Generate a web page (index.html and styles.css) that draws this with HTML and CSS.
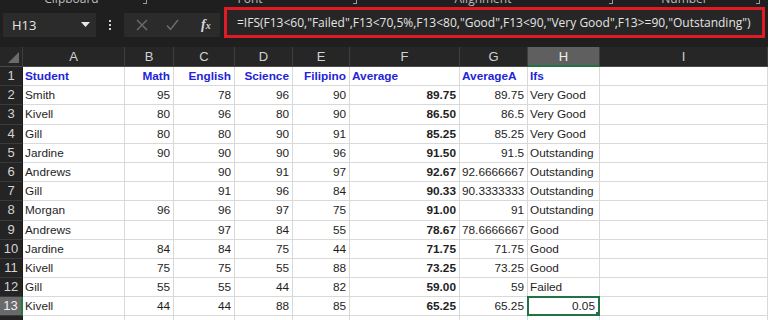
FILE: index.html
```html
<!DOCTYPE html>
<html lang="en">
<head>
    <meta charset="UTF-8">
    <title>IFS formula</title>
    <link rel="stylesheet" href="styles.css">
</head>
<body>
    <div class="ribbon-labels">
        <span class="grp" style="width:143px">Clipboard</span><span class="launch"></span>
        <span class="grp" style="width:206px">Font</span><span class="launch"></span>
        <span class="grp" style="width:252px">Alignment</span><span class="launch"></span>
        <span class="grp" style="width:143px">Number</span><span class="launch"></span>
    </div>

    <div class="formula-bar">
        <div class="name-box">
            <span>H13</span>
            <svg width="9" height="6" viewBox="0 0 9 6"><path d="M0 0 L9 0 L4.5 5 Z" fill="#e8e8e8"/></svg>
        </div>
        <div class="vdots"><i></i><i></i><i></i></div>
        <div class="fx-buttons">
            <svg width="12" height="12" viewBox="0 0 12 12"><path d="M1 1 L11 11 M11 1 L1 11" stroke="#6e6e6e" stroke-width="1.4"/></svg>
            <svg width="13" height="12" viewBox="0 0 13 12"><path d="M1 6.5 L4.5 10.5 L12 1" stroke="#6e6e6e" stroke-width="1.4" fill="none"/></svg>
            <span class="fx"><i>f</i><small>x</small></span>
        </div>
        <div class="formula-input">=IFS(F13&lt;60,"Failed",F13&lt;70,5%,F13&lt;80,"Good",F13&lt;90,"Very Good",F13&gt;=90,"Outstanding")</div>
    </div>

    <div class="sheet">
        <div class="row col-heads">
            <div class="corner"></div>
            <div>A</div><div>B</div><div>C</div><div>D</div><div>E</div><div>F</div><div>G</div><div class="sel">H</div><div>I</div>
        </div>
        <div class="row">
            <div class="rh">1</div>
            <div class="h">Student</div><div class="h r">Math</div><div class="h r">English</div><div class="h r">Science</div><div class="h r">Filipino</div><div class="h">Average</div><div class="h">AverageA</div><div class="h">Ifs</div><div></div>
        </div>
        <div class="row">
            <div class="rh">2</div>
            <div>Smith</div><div class="r">95</div><div class="r">78</div><div class="r">96</div><div class="r">90</div><div class="r b">89.75</div><div class="r">89.75</div><div>Very Good</div><div></div>
        </div>
        <div class="row">
            <div class="rh">3</div>
            <div>Kivell</div><div class="r">80</div><div class="r">96</div><div class="r">80</div><div class="r">90</div><div class="r b">86.50</div><div class="r">86.5</div><div>Very Good</div><div></div>
        </div>
        <div class="row">
            <div class="rh">4</div>
            <div>Gill</div><div class="r">80</div><div class="r">80</div><div class="r">90</div><div class="r">91</div><div class="r b">85.25</div><div class="r">85.25</div><div>Very Good</div><div></div>
        </div>
        <div class="row">
            <div class="rh">5</div>
            <div>Jardine</div><div class="r">90</div><div class="r">90</div><div class="r">90</div><div class="r">96</div><div class="r b">91.50</div><div class="r">91.5</div><div>Outstanding</div><div></div>
        </div>
        <div class="row">
            <div class="rh">6</div>
            <div>Andrews</div><div class="r"></div><div class="r">90</div><div class="r">91</div><div class="r">97</div><div class="r b">92.67</div><div class="r">92.6666667</div><div>Outstanding</div><div></div>
        </div>
        <div class="row">
            <div class="rh">7</div>
            <div>Gill</div><div class="r"></div><div class="r">91</div><div class="r">96</div><div class="r">84</div><div class="r b">90.33</div><div class="r">90.3333333</div><div>Outstanding</div><div></div>
        </div>
        <div class="row">
            <div class="rh">8</div>
            <div>Morgan</div><div class="r">96</div><div class="r">96</div><div class="r">97</div><div class="r">75</div><div class="r b">91.00</div><div class="r">91</div><div>Outstanding</div><div></div>
        </div>
        <div class="row">
            <div class="rh">9</div>
            <div>Andrews</div><div class="r"></div><div class="r">97</div><div class="r">84</div><div class="r">55</div><div class="r b">78.67</div><div class="r">78.6666667</div><div>Good</div><div></div>
        </div>
        <div class="row">
            <div class="rh">10</div>
            <div>Jardine</div><div class="r">84</div><div class="r">84</div><div class="r">75</div><div class="r">44</div><div class="r b">71.75</div><div class="r">71.75</div><div>Good</div><div></div>
        </div>
        <div class="row">
            <div class="rh">11</div>
            <div>Kivell</div><div class="r">75</div><div class="r">75</div><div class="r">55</div><div class="r">88</div><div class="r b">73.25</div><div class="r">73.25</div><div>Good</div><div></div>
        </div>
        <div class="row">
            <div class="rh">12</div>
            <div>Gill</div><div class="r">55</div><div class="r">55</div><div class="r">44</div><div class="r">82</div><div class="r b">59.00</div><div class="r">59</div><div>Failed</div><div></div>
        </div>
        <div class="row">
            <div class="rh sel">13</div>
            <div>Kivell</div><div class="r">44</div><div class="r">44</div><div class="r">88</div><div class="r">85</div><div class="r b">65.25</div><div class="r">65.25</div><div class="r active">0.05</div><div></div>
        </div>
        <div class="row">
            <div class="rh">14</div>
            <div>Jardine</div><div class="r">90</div><div class="r">90</div><div class="r">90</div><div class="r">90</div><div class="r b">90.00</div><div class="r">90</div><div>Very Good</div><div></div>
        </div>
    </div>
</body>
</html>
```

FILE: styles.css
```css
* {
    margin: 0;
    padding: 0;
    box-sizing: border-box;
}
body {
    width: 768px;
    height: 320px;
    overflow: hidden;
    background: #1f1f1f;
    font-family: "Liberation Sans", Arial, sans-serif;
}

/* ribbon group names, cut off at the top */
.ribbon-labels {
    height: 8px;
    display: flex;
    align-items: flex-end;
    overflow: hidden;
    color: #bdbdbd;
    font-family: "Open Sans", sans-serif;
    font-size: 12px;
    line-height: 12px;
}
.ribbon-labels .grp {
    text-align: center;
    transform: translateY(-3px);
}
.ribbon-labels .launch {
    width: 4px;
    height: 4px;
    border-right: 1px solid #9a9a9a;
    border-bottom: 1px solid #9a9a9a;
    margin-bottom: 4px;
}

/* formula bar */
.formula-bar {
    height: 38px;
    display: flex;
    align-items: flex-start;
}
.name-box {
    margin: 5px 0 0 3px;
    width: 93px;
    height: 24px;
    background: #2b2b2b;
    display: flex;
    align-items: center;
    justify-content: space-between;
    padding: 0 6px 0 9px;
    color: #e6e6e6;
    font-family: "Open Sans", sans-serif;
    font-size: 13px;
}
.vdots {
    width: 28px;
    height: 34px;
    display: flex;
    flex-direction: column;
    align-items: center;
    justify-content: center;
    gap: 2px;
}
.vdots i {
    width: 2px;
    height: 2px;
    background: #cfcfcf;
}
.fx-buttons {
    margin-top: 5px;
    width: 96px;
    height: 24px;
    background: #2b2b2b;
    display: flex;
    align-items: center;
    padding-left: 12px;
    gap: 18px;
}
.fx {
    color: #d8d8d8;
    font-family: "Liberation Serif", serif;
    font-size: 14px;
    font-weight: bold;
    margin-left: 4px;
}
.fx small {
    font-size: 10px;
    font-style: italic;
}
.formula-input {
    margin: -1px 0 0 4px;
    width: 541px;
    height: 31px;
    border: 3px solid #e01b24;
    background: #262626;
    color: #e4e4e4;
    font-family: "Open Sans", sans-serif;
    font-size: 12px;
    line-height: 25px;
    padding-left: 10px;
    white-space: nowrap;
    overflow: hidden;
}

/* worksheet grid */
.row {
    display: grid;
    grid-template-columns: 23px 102px 49px 61px 58px 57px 110px 68px 72px 168px;
    height: 19.2px;
    background: #ffffff;
    font-size: 11.8px;
    line-height: 18.2px;
    color: #1e1e1e;
}
.row > div {
    border-right: 1px solid #d9d9d9;
    border-bottom: 1px solid #d9d9d9;
    padding: 0 2px;
    white-space: nowrap;
    overflow: hidden;
}
.row .r {
    text-align: right;
    padding-right: 3px;
}
.row .b {
    font-weight: bold;
}
.row .h {
    color: #2323d8;
    font-weight: bold;
}
.row .rh {
    background: #242424;
    color: #d4d4d4;
    text-align: center;
    font-size: 13px;
    border-right: 1px solid #1a1a1a;
    border-bottom: 1px solid #3a3a3a;
}
.row .rh.sel {
    background: #6a6a6a;
    color: #f0f0f0;
    border-right: 2px solid #1f7a45;
}
.row .active {
    position: relative;
    border: 2px solid #217346;
    margin: -1px 0 0 -1px;
    line-height: 17px;
}
.row .active::after {
    content: "";
    position: absolute;
    right: -4px;
    bottom: -4px;
    width: 5px;
    height: 5px;
    background: #217346;
    border: 1px solid #fff;
}

.col-heads {
    height: 20px;
    background: #262626;
    margin-top: 1px;
}
.col-heads > div {
    background: #262626;
    color: #d2d2d2;
    text-align: center;
    font-size: 13px;
    line-height: 19px;
    border-right: 1px solid #3e3e3e;
    border-bottom: 1px solid #4a4a4a;
}
.col-heads .sel {
    background: #5f5f5f;
    color: #f0f0f0;
    border-bottom: 2px solid #217346;
}
.col-heads .corner {
    position: relative;
}
.col-heads .corner::after {
    content: "";
    position: absolute;
    right: 3px;
    bottom: 3px;
    border-style: solid;
    border-width: 0 0 11px 11px;
    border-color: transparent transparent #6b6b6b transparent;
}
```
